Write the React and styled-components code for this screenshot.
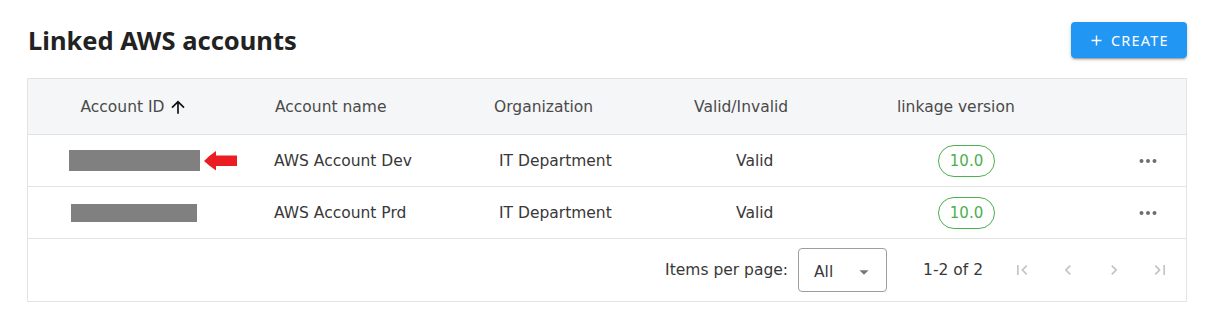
import React from 'react'
import styled, { createGlobalStyle } from 'styled-components';

const GlobalStyle = createGlobalStyle`
    body {
        margin : 0;
        background : #ffffff;
        font-family : "DejaVu Sans", "Noto Sans", sans-serif;
        color : rgba(0, 0, 0, 0.87);
    }
`;
const Page = styled.div`
    padding : 22px 27px 0 27px;
`;
const TitleBar = styled.div`
    display : flex;
    justify-content : space-between;
    align-items : center;
    height : 36px;
    margin-bottom : 20px;
`;
const Title = styled.h1`
    margin : 0 0 0 1px;
    font-family : "Noto Sans", sans-serif;
    font-size : 25.5px;
    font-weight : 700;
    color : #222;
`;
const CreateButton = styled.button`
    display : flex;
    align-items : center;
    gap : 6px;
    height : 36px;
    width : 116px;
    padding : 0 0 0 17px;
    border : none;
    border-radius : 4px;
    background : #2196f3;
    color : #fff;
    font-family : "Noto Sans", sans-serif;
    font-size : 14.5px;
    letter-spacing : 1.2px;
    box-shadow : 0 3px 1px -2px rgba(0,0,0,.2), 0 2px 2px 0 rgba(0,0,0,.14), 0 1px 5px 0 rgba(0,0,0,.12);
`;
const Card = styled.div`
    border : 1px solid #e3e3e3;
`;
const Row = styled.div`
    display : grid;
    grid-template-columns : 212px 230px 200px 190px 220px 1fr;
    align-items : center;
    height : ${p => p.head ? '55px' : '51px'};
    background : ${p => p.head ? '#f5f6f8' : '#fff'};
    border-bottom : 1px solid #e3e3e3;
`;
const HeadCell = styled.div`
    display : flex;
    align-items : center;
    justify-content : ${p => p.center ? 'center' : 'flex-start'};
    padding-left : ${p => p.pad || 0}px;
    font-size : 15.5px;
    color : #4a4a4a;
`;
const SortIcon = styled.span`
    display : flex;
    margin-left : 3px;
`;
const Cell = styled.div`
    display : flex;
    align-items : center;
    justify-content : ${p => p.center ? 'center' : 'flex-start'};
    padding-left : ${p => p.pad || 0}px;
    font-size : 15.5px;
    color : #383838;
`;
const Redacted = styled.div`
    width : ${p => p.w}px;
    height : ${p => p.h}px;
    background : #808080;
`;
const Marker = styled.svg`
    position : absolute;
    left : 135px;
    top : 1px;
`;
const IdBox = styled.div`
    position : relative;
    display : flex;
    align-items : center;
`;
const Chip = styled.span`
    display : inline-flex;
    align-items : center;
    justify-content : center;
    width : 55px;
    height : 30px;
    border : 1px solid #4caf50;
    border-radius : 16px;
    color : #4caf50;
    font-size : 15px;
`;
const Footer = styled.div`
    display : flex;
    justify-content : flex-end;
    align-items : center;
    height : 62px;
    padding-right : 8px;
    font-size : 15.5px;
    color : #383838;
`;
const Select = styled.div`
    display : flex;
    align-items : center;
    justify-content : space-between;
    box-sizing : border-box;
    width : 89px;
    height : 44px;
    margin-left : 10px;
    padding : 3px 11px 0 15px;
    border : 1px solid #9e9e9e;
    border-radius : 4px;
`;
const Range = styled.span`
    margin : 0 21px 0 36px;
`;
const PageButton = styled.span`
    display : flex;
    align-items : center;
    justify-content : center;
    width : 36px;
    height : 36px;
    & + & {
        margin-left : 10px;
    }
`;

const Icon = ({ d, size = 20, color = 'currentColor' }) => (
    <svg width={size} height={size} viewBox="0 0 24 24"><path d={d} fill={color} /></svg>
);

const icons = {
    up : "M13,20H11V8L5.5,13.5L4.08,12.08L12,4.16L19.92,12.08L18.5,13.5L13,8V20Z",
    plus : "M19,13H13V19H11V13H5V11H11V5H13V11H19V13Z",
    down : "M7,10L12,15L17,10H7Z",
    first : "M18.41,16.59L13.82,12L18.41,7.41L17,6L11,12L17,18L18.41,16.59M6,6H8V18H6V6Z",
    prev : "M15.41,16.58L10.83,12L15.41,7.41L14,6L8,12L14,18L15.41,16.58Z",
    next : "M8.59,16.58L13.17,12L8.59,7.41L10,6L16,12L10,18L8.59,16.58Z",
    last : "M5.59,7.41L10.18,12L5.59,16.59L7,18L13,12L7,6L5.59,7.41M16,6H18V18H16V6Z"
};

const accounts = [
    { w : 131, h : 21, name : "AWS Account Dev", org : "IT Department", valid : "Valid", version : "10.0", marked : true },
    { w : 126, h : 18, name : "AWS Account Prd", org : "IT Department", valid : "Valid", version : "10.0" }
];

const Dots = () => (
    <svg width="18" height="6" viewBox="0 0 18 6">
        <circle cx="2.5" cy="3" r="2" fill="#6e6e6e" />
        <circle cx="9" cy="3" r="2" fill="#6e6e6e" />
        <circle cx="15.5" cy="3" r="2" fill="#6e6e6e" />
    </svg>
);

function App() {
    return (
        <Page>
            <GlobalStyle />
            <TitleBar>
                <Title>Linked AWS accounts</Title>
                <CreateButton><Icon d={icons.plus} size={17} />CREATE</CreateButton>
            </TitleBar>
            <Card>
                <Row head>
                    <HeadCell center>Account ID<SortIcon><Icon d={icons.up} size={20} color="#111" /></SortIcon></HeadCell>
                    <HeadCell pad={35}>Account name</HeadCell>
                    <HeadCell pad={24}>Organization</HeadCell>
                    <HeadCell pad={24}>Valid/Invalid</HeadCell>
                    <HeadCell pad={37}>linkage version</HeadCell>
                    <HeadCell />
                </Row>
                {accounts.map((a, index) => (
                    <Row key={index}>
                        <Cell center>
                            <IdBox>
                                <Redacted w={a.w} h={a.h} />
                                {a.marked && (
                                    <Marker width="34" height="20" viewBox="0 0 34 20">
                                        <path d="M0,10 Q6,4 12,0 L12,4.5 L33,4.5 L33,15 L12,15 L12,19.5 Q6,15.5 0,10 Z" fill="#ec1c24" />
                                    </Marker>
                                )}
                            </IdBox>
                        </Cell>
                        <Cell pad={34}>{a.name}</Cell>
                        <Cell pad={29}>{a.org}</Cell>
                        <Cell pad={66}>{a.valid}</Cell>
                        <Cell pad={78}><Chip>{a.version}</Chip></Cell>
                        <Cell pad={59}><Dots /></Cell>
                    </Row>
                ))}
                <Footer>
                    Items per page:
                    <Select>All<Icon d={icons.down} size={22} color="#777" /></Select>
                    <Range>1-2 of 2</Range>
                    <PageButton><Icon d={icons.first} color="#c4c4c4" /></PageButton>
                    <PageButton><Icon d={icons.prev} color="#c4c4c4" /></PageButton>
                    <PageButton><Icon d={icons.next} color="#c4c4c4" /></PageButton>
                    <PageButton><Icon d={icons.last} color="#c4c4c4" /></PageButton>
                </Footer>
            </Card>
        </Page>
    )
}

export default App
